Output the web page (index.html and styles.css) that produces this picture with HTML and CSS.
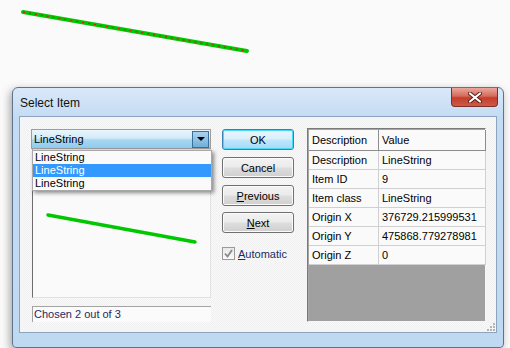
FILE: index.html
```html
<!DOCTYPE html>
<html lang="en">
<head>
  <meta charset="UTF-8" />
  <title>Select Item</title>
  <link rel="stylesheet" href="styles.css">
</head>
<body>

<div class="stage">
  <!-- map canvas behind the dialog -->
  <svg class="map" width="510" height="87" viewBox="0 0 510 87">
    <line x1="23" y1="12" x2="247" y2="51" stroke="#00c800" stroke-width="4" stroke-linecap="round"/>
    <line x1="23" y1="12" x2="247" y2="51" stroke="#e81010" stroke-width="1.2" stroke-dasharray="2 4"/>
  </svg>

  <div class="window">
    <div class="titlebar">
      <span class="title">Select Item</span>
      <div class="close">
        <svg width="14" height="11" viewBox="0 0 14 11">
          <path d="M2 1.5 L12 9.5 M12 1.5 L2 9.5" stroke="#5a1f18" stroke-width="4" stroke-linecap="round"/>
          <path d="M2 1.5 L12 9.5 M12 1.5 L2 9.5" stroke="#fff" stroke-width="2.2" stroke-linecap="round"/>
        </svg>
      </div>
    </div>

    <div class="client">
      <!-- Left column -->
      <div class="left">
        <div class="combo">
          <span>LineString</span>
          <div class="combo-btn"><i></i></div>
        </div>
        <div class="preview">
          <svg width="178" height="148" viewBox="0 0 178 148">
            <line x1="15" y1="65" x2="162" y2="92" stroke="#00c800" stroke-width="3.5" stroke-linecap="round"/>
          </svg>
        </div>
        <div class="status">Chosen 2 out of 3</div>

        <ul class="droplist">
          <li>LineString</li>
          <li class="sel">LineString</li>
          <li>LineString</li>
        </ul>
      </div>

      <!-- Buttons -->
      <div class="buttons">
        <div class="btn default">OK</div>
        <div class="btn">Cancel</div>
        <div class="btn"><u>P</u>revious</div>
        <div class="btn"><u>N</u>ext</div>
        <label class="check">
          <span class="box">
            <svg width="9" height="9" viewBox="0 0 9 9"><path d="M1 4.5 L3.5 7.5 L8 1" fill="none" stroke="#8a8a8a" stroke-width="1.8"/></svg>
          </span>
          <span class="check-text"><u>A</u>utomatic</span>
        </label>
      </div>

      <!-- Property grid -->
      <div class="grid">
        <table>
          <tr class="head"><th>Description</th><th>Value</th></tr>
          <tr><td>Description</td><td>LineString</td></tr>
          <tr><td>Item ID</td><td>9</td></tr>
          <tr><td>Item class</td><td>LineString</td></tr>
          <tr><td>Origin X</td><td>376729.215999531</td></tr>
          <tr><td>Origin Y</td><td>475868.779278981</td></tr>
          <tr><td>Origin Z</td><td>0</td></tr>
        </table>
      </div>

      <svg class="grip" width="9" height="9" viewBox="0 0 9 9">
        <rect x="7" y="1" width="2" height="2" fill="#b5b5b5"/>
        <rect x="4" y="4" width="2" height="2" fill="#b5b5b5"/>
        <rect x="7" y="4" width="2" height="2" fill="#b5b5b5"/>
        <rect x="1" y="7" width="2" height="2" fill="#b5b5b5"/>
        <rect x="4" y="7" width="2" height="2" fill="#b5b5b5"/>
        <rect x="7" y="7" width="2" height="2" fill="#b5b5b5"/>
      </svg>
    </div>
  </div>
</div>

</body>
</html>
```

FILE: styles.css
```css
body {
  margin: 0; padding: 0;
  background: #fafafa;
  font-family: 'Liberation Sans', Arial, sans-serif;
  font-size: 11px; color: #000;
}
.stage { width: 510px; height: 348px; overflow: hidden; }
.map { display: block; }

.window {
  margin-left: 12px; width: 478px; height: 252px;
  border: 1px solid #5f7389; border-radius: 6px 6px 4px 4px;
  background: linear-gradient(#d9e8f8, #c3dbf4 30px, #c0d9f3);
  box-shadow: -2px 3px 9px rgba(0,0,0,0.35);
  padding: 0 6px 7px 6px; box-sizing: content-box;
}
.titlebar {
  height: 28px; display: flex; align-items: center; justify-content: space-between;
}
.title { font-size: 12px; color: #111; margin: 1px 0 0 1px; }
.close {
  align-self: flex-start; margin-right: -1px;
  width: 45px; height: 18px;
  border: 1px solid #7b3128; border-top: none; border-radius: 0 0 4px 4px;
  background: linear-gradient(#e9a89c, #d66a5a 45%, #c33d2d 55%, #cf5a45);
  display: flex; align-items: center; justify-content: center;
}

.client {
  position: relative;
  width: 455px; height: 193px;
  border: 1px solid #8da4bf;
  background: repeating-conic-gradient(#f0f0f0 0 25%, #f9f9f9 0 50%) 0 0 / 2px 2px;
  display: flex; padding: 12px 10px 10px 11px;
  box-sizing: content-box;
}

.left { position: relative; width: 180px; display: flex; flex-direction: column; }
.combo {
  height: 20px; box-sizing: border-box;
  border: 1px solid #9d9d9d;
  background: linear-gradient(#eaf5fc, #d4ebf8 45%, #a7d7f2 55%, #8fcbee);
  display: flex; align-items: center; justify-content: space-between;
  padding: 0 1px 0 2px;
}
.combo-btn {
  width: 15px; height: 15px; border: 1px solid #3a6f9a;
  background: linear-gradient(#a9d3ee, #6fb0dc);
  display: flex; align-items: center; justify-content: center;
}
.combo-btn i {
  width: 0; height: 0;
  border-left: 4px solid transparent; border-right: 4px solid transparent;
  border-top: 4px solid #000;
}
.preview {
  height: 149px; box-sizing: border-box; margin-left: 1px;
  border: 1px solid #e2e2e2; border-left-color: #6e6e6e;
  background: #fafafa;
}
.preview svg { display: block; }
.status {
  margin-top: 8px; height: 16px; box-sizing: border-box; margin-left: 1px;
  border-top: 1px solid #a3a3a3; border-left: 1px solid #a3a3a3;
  background: #fbfbfb; color: #1d2a66;
  padding-left: 1px; line-height: 15px; font-size: 11px;
}
.droplist {
  position: absolute; left: 1px; top: 21px; width: 180px;
  margin: 0; padding: 0; list-style: none; box-sizing: border-box;
  border: 1px solid #a8a8a8; background: #fafafa;
  box-shadow: 2px 2px 4px rgba(0,0,0,0.45);
}
.droplist li { height: 13px; line-height: 13px; padding-left: 2px; }
.droplist li.sel { background: #3399ff; color: #fff; }

.buttons { width: 72px; margin-left: 11px; display: flex; flex-direction: column; }
.btn {
  height: 21px; box-sizing: border-box; margin-bottom: 7px;
  border: 1px solid #707070; border-radius: 3px;
  background: linear-gradient(#f3f3f3, #ebebeb 45%, #dddddd 55%, #cfcfcf);
  box-shadow: inset 0 0 0 1px #fbfbfb;
  display: flex; align-items: center; justify-content: center; font-size: 11px;
}
.btn.default {
  border-color: #3c7fb1;
  box-shadow: inset 0 0 0 1px #48d9fa;
  background: linear-gradient(#eaf6fd, #d9f0fc 45%, #bee6fd 55%, #a7d9f5);
}
.btn:nth-child(3) { margin-bottom: 6px; }
.check { display: flex; align-items: center; margin-top: 7px; font-size: 11px; }
.box {
  width: 11px; height: 11px; border: 1px solid #9a9a9a;
  background: linear-gradient(#e8e8e8, #fbfbfb);
  display: flex; align-items: center; justify-content: center; margin-right: 3px;
}
.check-text { color: #1d2a66; }

.grid {
  margin-left: 13px; margin-top: -1px; width: 179px; height: 194px;
  box-sizing: border-box;
  border: 1px solid #f6f6f6; border-top-color: #7a7a7a; border-left-color: #7a7a7a;
  box-shadow: inset 1px 1px 0 #a5a5a5;
  background: #a0a0a0;
}
.grid table { border-collapse: collapse; width: 177px; margin: 1px 0 0 1px; }
.grid th, .grid td {
  text-align: left; font-weight: normal; padding: 0 0 0 3px;
  height: 18px; background: #fafafa; white-space: nowrap; font-size: 11px;
  border-right: 1px solid #d0d0d0; border-bottom: 1px solid #d0d0d0;
}
.grid th { height: 20px; border-bottom: 1px solid #8c8c8c; border-right: 1px solid #8c8c8c; }
.grid th:first-child, .grid td:first-child { width: 66px; }

.grip { position: absolute; right: 1px; bottom: 1px; }
```
